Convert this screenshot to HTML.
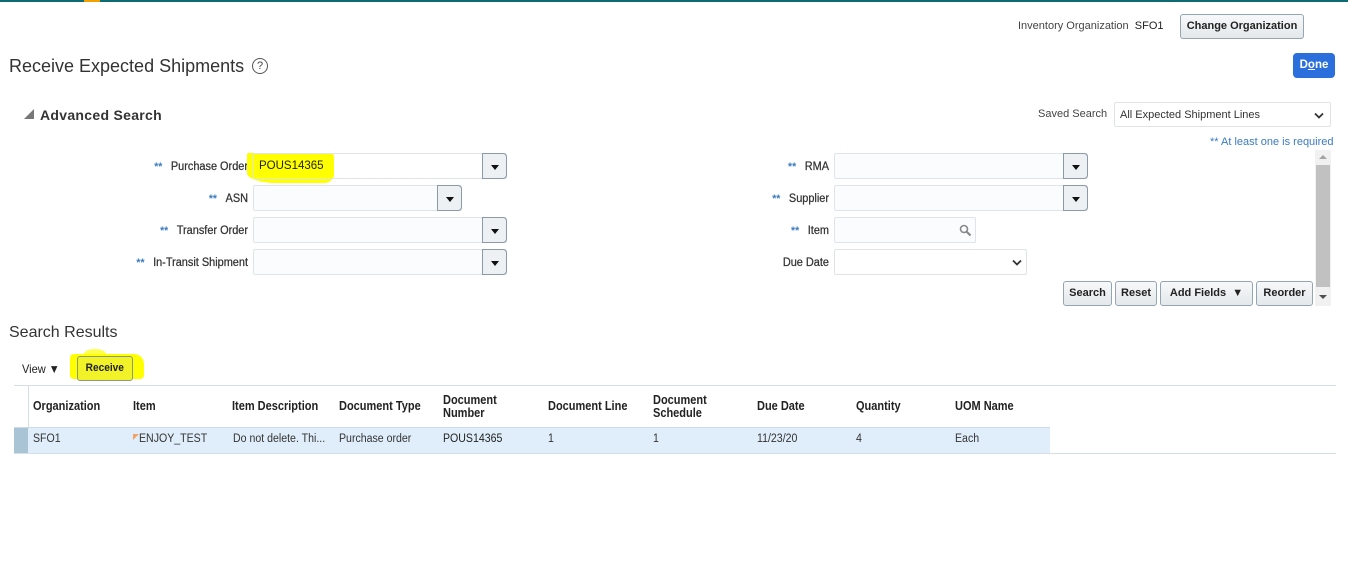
<!DOCTYPE html>
<html><head><meta charset="utf-8"><style>
*{box-sizing:border-box;margin:0;padding:0}
body{width:1348px;height:569px;background:#fff;position:relative;overflow:hidden;font-family:"Liberation Sans",Arial,sans-serif;color:#333;font-size:12px}
.a{position:absolute;white-space:nowrap}
.n{transform:scaleX(.92);transform-origin:left center}
.lbl{position:absolute;text-align:right;font-size:11.5px;color:#333;-webkit-text-stroke:.25px #333;transform:scaleX(.95);transform-origin:right center}
.lbl b{color:#3a7bbf;font-weight:bold;margin-right:9px;font-size:11px;-webkit-text-stroke:0}
.inp{position:absolute;height:26px;border:1px solid #dfe4e8;background:#fbfcfd;border-radius:2px}
.dd{position:absolute;right:-1px;top:-1px;width:25px;height:26px;border:1px solid #8a9aa6;border-radius:0 4px 4px 0;background:#eef1f3}
.dd:after{content:"";position:absolute;left:8px;top:11px;border-left:4px solid transparent;border-right:4px solid transparent;border-top:5px solid #111}
.btn{position:absolute;height:25px;border:1px solid #95a6b2;border-radius:3px;background:linear-gradient(#f7f8f9,#e4e8eb);font-size:11px;color:#222;text-align:center;line-height:23px}
.th{position:absolute;font-size:12.5px;font-weight:bold;color:#222;transform:scaleX(.88);transform-origin:left center;line-height:13px}
.td{position:absolute;top:433px;font-size:11.5px;color:#333;transform:scaleX(.92);transform-origin:left center}
</style></head><body>
<div class="a" style="left:0;top:0;width:1348px;height:2px;background:#0f6b72"></div>
<div class="a" style="left:84px;top:0;width:16px;height:2px;background:#f0a000"></div>

<div class="a" style="left:1018px;top:20px;font-size:11px;color:#444">Inventory Organization &nbsp;<span style="color:#222">SFO1</span></div>
<div class="btn" style="left:1180px;top:14px;width:124px;height:25px;font-weight:bold;font-size:11px">Change Organization</div>
<div class="a" style="left:1293px;top:53px;width:42px;height:25px;background:#2a6fdb;border-radius:4px;color:#fff;font-weight:bold;font-size:11.5px;text-align:center;line-height:25px">D<u>o</u>ne</div>

<div class="a" style="left:9px;top:56px;font-size:18px;color:#333">Receive Expected Shipments</div>
<div class="a" style="left:252px;top:58px;width:16px;height:16px;border:1.3px solid #555;border-radius:50%;font-size:11px;text-align:center;line-height:14px;color:#444">?</div>

<div class="a" style="left:24px;top:109px;width:0;height:0;border-left:10px solid transparent;border-bottom:10px solid #777"></div>
<div class="a" style="left:40px;top:107px;font-size:14px;font-weight:bold;color:#333;letter-spacing:.3px">Advanced Search</div>

<div class="a" style="left:1038px;top:108px;font-size:11px;color:#444">Saved Search</div>
<div class="inp" style="left:1114px;top:102px;width:217px;height:25px;background:#fff"><span class="a" style="left:5px;top:6px;font-size:11px">All Expected Shipment Lines</span><svg class="a" style="left:199px;top:9px" width="10" height="7" viewBox="0 0 10 7"><path d="M1 1.5L5 5.5L9 1.5" fill="none" stroke="#333" stroke-width="1.8"/></svg></div>
<div class="a" style="left:1210px;top:136px;font-size:11px;color:#3a7bbf">** At least one is required</div>

<div class="lbl" style="left:80px;width:168px;top:161px"><b>**</b>Purchase Order</div>
<div class="a" style="left:247px;top:153px;width:87px;height:30px;background:#ffff00;border-radius:2px 4px 10px 30px / 2px 4px 8px 10px"></div>
<div class="inp" style="left:253px;top:153px;width:254px;background:transparent"><span class="a" style="left:5px;top:6px;font-size:11.5px;color:#222">POUS14365</span><div class="dd"></div></div>
<div class="lbl" style="left:80px;width:168px;top:193px"><b>**</b>ASN</div>
<div class="inp" style="left:253px;top:185px;width:209px"><div class="dd"></div></div>
<div class="lbl" style="left:80px;width:168px;top:225px"><b>**</b>Transfer Order</div>
<div class="inp" style="left:253px;top:217px;width:254px"><div class="dd"></div></div>
<div class="lbl" style="left:80px;width:168px;top:257px"><b>**</b>In-Transit Shipment</div>
<div class="inp" style="left:253px;top:249px;width:254px"><div class="dd"></div></div>

<div class="lbl" style="left:700px;width:129px;top:161px"><b>**</b>RMA</div>
<div class="inp" style="left:834px;top:153px;width:254px"><div class="dd"></div></div>
<div class="lbl" style="left:700px;width:129px;top:193px"><b>**</b>Supplier</div>
<div class="inp" style="left:834px;top:185px;width:254px"><div class="dd"></div></div>
<div class="lbl" style="left:700px;width:129px;top:225px"><b>**</b>Item</div>
<div class="inp" style="left:834px;top:217px;width:142px"><svg class="a" style="left:124px;top:6px" width="13" height="13" viewBox="0 0 13 13"><circle cx="5" cy="5" r="3.5" fill="none" stroke="#888" stroke-width="1.6"/><path d="M7.6 7.6L11.5 11.5" stroke="#888" stroke-width="2.2"/></svg></div>
<div class="lbl" style="left:700px;width:129px;top:257px">Due Date</div>
<div class="inp" style="left:834px;top:249px;width:193px;background:#fff"><svg class="a" style="left:177px;top:9px" width="10" height="7" viewBox="0 0 10 7"><path d="M1 1.5L5 5.5L9 1.5" fill="none" stroke="#333" stroke-width="1.8"/></svg></div>

<div class="a" style="left:1315px;top:150px;width:16px;height:156px;background:#f1f1f1"></div>
<div class="a" style="left:1316px;top:165px;width:14px;height:122px;background:#c1c1c1"></div>
<div class="a" style="left:1319px;top:155px;border-left:4px solid transparent;border-right:4px solid transparent;border-bottom:4px solid #a3a3a3"></div>
<div class="a" style="left:1319px;top:295px;border-left:4px solid transparent;border-right:4px solid transparent;border-top:4px solid #505050"></div>

<div class="btn" style="left:1063px;top:281px;width:49px;font-weight:bold">Search</div>
<div class="btn" style="left:1115px;top:281px;width:42px;font-weight:bold">Reset</div>
<div class="btn" style="left:1160px;top:281px;width:93px;font-weight:bold">Add Fields &nbsp;&#9660;</div>
<div class="btn" style="left:1256px;top:281px;width:57px;font-weight:bold">Reorder</div>

<div class="a" style="left:9px;top:324px;font-size:16px;color:#333">Search Results</div>
<div class="a n" style="left:22px;top:362px;font-size:12px;color:#222">View &#9660;</div>
<div class="a" style="left:70px;top:354px;width:74px;height:25px;background:#ffff00;border-radius:4px 10px 4px 4px"></div>
<div class="a" style="left:84px;top:349px;width:22px;height:10px;background:#ffff00;border-radius:50%;opacity:.7"></div>
<div class="btn" style="left:77px;top:356px;width:56px;height:25px;background:#f2f228;border-color:#8a9a80;font-weight:bold"><span style="display:inline-block;transform:scaleX(.92)">Receive</span></div>

<div class="a" style="left:14px;top:385px;width:1322px;height:1px;background:#d6dfe6"></div>
<div class="a" style="left:28px;top:386px;width:1px;height:41px;background:#d6dfe6"></div>
<div class="a" style="left:14px;top:427px;width:1036px;height:26px;background:#dfeefa"></div>
<div class="a" style="left:14px;top:427px;width:14px;height:26px;background:#a9c4d4"></div>
<div class="a" style="left:14px;top:453px;width:1322px;height:1px;background:#d6dfe6"></div>
<div class="a" style="left:14px;top:427px;width:1036px;height:1px;background:#cfdbe4"></div>

<div class="th" style="left:33px;top:400px">Organization</div>
<div class="th" style="left:133px;top:400px">Item</div>
<div class="th" style="left:232px;top:400px">Item Description</div>
<div class="th" style="left:339px;top:400px">Document Type</div>
<div class="th" style="left:443px;top:394px">Document<br>Number</div>
<div class="th" style="left:548px;top:400px">Document Line</div>
<div class="th" style="left:653px;top:394px">Document<br>Schedule</div>
<div class="th" style="left:757px;top:400px">Due Date</div>
<div class="th" style="left:856px;top:400px">Quantity</div>
<div class="th" style="left:955px;top:400px">UOM Name</div>

<div class="td" style="left:33px">SFO1</div>
<div class="a" style="left:133px;top:434px;border-top:6px solid #f4a261;border-right:6px solid transparent"></div>
<div class="td" style="left:139px">ENJOY_TEST</div>
<div class="td" style="left:233px">Do not delete. Thi...</div>
<div class="td" style="left:339px">Purchase order</div>
<div class="td" style="left:443px;color:#222">POUS14365</div>
<div class="td" style="left:548px">1</div>
<div class="td" style="left:653px">1</div>
<div class="td" style="left:757px">11/23/20</div>
<div class="td" style="left:856px">4</div>
<div class="td" style="left:955px">Each</div>
</body></html>
